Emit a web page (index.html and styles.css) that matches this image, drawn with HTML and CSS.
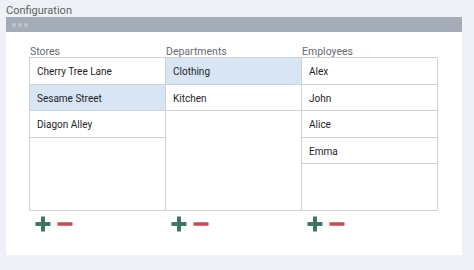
FILE: index.html
```html
<!DOCTYPE html>
<html>
<head>
<meta charset="utf-8">
<link rel="stylesheet" href="styles.css">
</head>
<body>
<div class="page">
  <div class="title">Configuration</div>
  <div class="window">
    <div class="titlebar"><span class="dot"></span><span class="dot"></span><span class="dot"></span></div>
    <div class="panel">
      <div class="columns">
        <div class="col">
          <div class="label">Stores</div>
          <div class="list">
            <div class="row">Cherry Tree Lane</div>
            <div class="row sel">Sesame Street</div>
            <div class="row">Diagon Alley</div>
          </div>
          <div class="actions">
            <svg class="plus" width="16" height="16" viewBox="0 0 16 16"><path d="M8 0.5v15M0.5 8h15" stroke="#3e7564" stroke-width="4"/></svg>
            <svg class="minus" width="16" height="16" viewBox="0 0 16 16"><path d="M0.5 8h15" stroke="#c9485a" stroke-width="3.5"/></svg>
          </div>
        </div>
        <div class="col">
          <div class="label">Departments</div>
          <div class="list">
            <div class="row sel">Clothing</div>
            <div class="row">Kitchen</div>
          </div>
          <div class="actions">
            <svg class="plus" width="16" height="16" viewBox="0 0 16 16"><path d="M8 0.5v15M0.5 8h15" stroke="#3e7564" stroke-width="4"/></svg>
            <svg class="minus" width="16" height="16" viewBox="0 0 16 16"><path d="M0.5 8h15" stroke="#c9485a" stroke-width="3.5"/></svg>
          </div>
        </div>
        <div class="col">
          <div class="label">Employees</div>
          <div class="list">
            <div class="row">Alex</div>
            <div class="row">John</div>
            <div class="row">Alice</div>
            <div class="row">Emma</div>
          </div>
          <div class="actions">
            <svg class="plus" width="16" height="16" viewBox="0 0 16 16"><path d="M8 0.5v15M0.5 8h15" stroke="#3e7564" stroke-width="4"/></svg>
            <svg class="minus" width="16" height="16" viewBox="0 0 16 16"><path d="M0.5 8h15" stroke="#c9485a" stroke-width="3.5"/></svg>
          </div>
        </div>
      </div>
    </div>
  </div>
</div>
</body>
</html>
```
FILE: styles.css
```css
html, body {
  margin: 0;
  padding: 0;
  background: #eef1f5;
  width: 474px;
  height: 270px;
  overflow: hidden;
  font-family: "Roboto", "Liberation Sans", sans-serif;
}
.page {
  padding: 3px 12px 0 6px;
}
.title {
  font-size: 11px;
  color: #5c6066;
  line-height: 15px;
  height: 14px;
}
.window {
  width: 456px;
}
.titlebar {
  height: 15px;
  background: #a4adb7;
  display: flex;
  align-items: center;
  gap: 2px;
  padding-left: 6px;
}
.dot {
  width: 4px;
  height: 4px;
  border-radius: 50%;
  background: #bfc5cc;
}
.panel {
  background: #fff;
  height: 223px;
  padding: 11px 0 0 23px;
  box-sizing: border-box;
}
.columns {
  display: flex;
}
.col {
  width: 137px;
  display: flex;
  flex-direction: column;
}
.col + .col {
  margin-left: -1px;
}
.label {
  font-size: 10.5px;
  color: #676b70;
  line-height: 17px;
  height: 14px;
  padding-left: 1px;
}
.list {
  height: 154px;
  border: 1px solid #cfd2d6;
  box-sizing: border-box;
}
.row {
  height: 26.5px;
  line-height: 27px;
  border-bottom: 1px solid #cfd2d6;
  box-sizing: border-box;
  padding-left: 7px;
  font-size: 10px;
  font-weight: 400;
  color: #1f2428;
}
.row.sel {
  background: #d7e5f4;
}
.actions {
  display: flex;
  align-items: center;
  gap: 6px;
  padding: 5px 0 0 6px;
}
.plus, .minus {
  display: block;
}
```
